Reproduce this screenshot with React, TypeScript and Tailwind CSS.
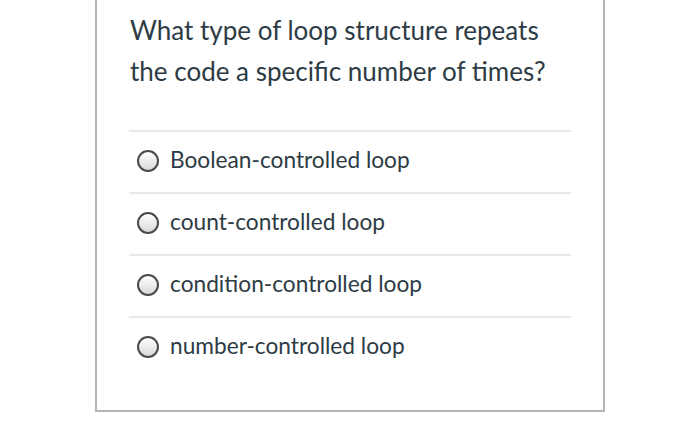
const OPTIONS = [
  "Boolean-controlled loop",
  "count-controlled loop",
  "condition-controlled loop",
  "number-controlled loop",
];

function Radio() {
  return (
    <span className="w-[22px] h-[22px] rounded-full border-2 border-[#4a4a4a] bg-gradient-to-b from-[#ffffff] to-[#d9d9d9] shrink-0" />
  );
}

export default function App() {
  return (
    <div className="w-[700px] h-[442px] bg-white overflow-hidden font-['Lato','Liberation_Sans',sans-serif] text-[#2d3b45]">
      <div className="ml-[95px] w-[510px] h-[412px] border-2 border-t-0 border-[#b5b5b5] px-[32px] pt-[10px]">
        <p className="text-[26px] leading-[41px] pl-[1px]">
          What type of loop structure repeats
          <br />
          the code a specific number of times?
        </p>
        <div className="mt-[38px]">
          {OPTIONS.map((o) => (
            <div
              key={o}
              className="h-[62px] border-t-2 border-[#e8e8e8] flex items-center gap-[11px] pl-[8px] pb-[3px]"
            >
              <Radio />
              <span className="text-[22.7px] leading-none">{o}</span>
            </div>
          ))}
        </div>
      </div>
    </div>
  );
}
